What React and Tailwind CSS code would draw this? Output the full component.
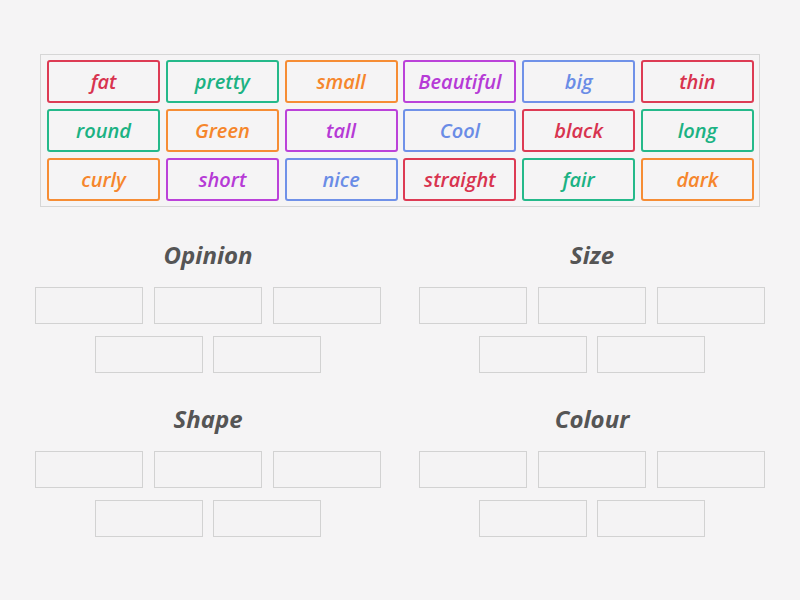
import React from "react";

const colors = {
  red: "border-[#dd3b54] text-[#d8334f]",
  green: "border-[#25b98a] text-[#1bb283]",
  orange: "border-[#f68d35] text-[#f5862c]",
  purple: "border-[#bb42d9] text-[#b63ad6]",
  blue: "border-[#7091e8] text-[#6a8ce6]",
};

const words = [
  ["fat", "red"], ["pretty", "green"], ["small", "orange"], ["Beautiful", "purple"], ["big", "blue"], ["thin", "red"],
  ["round", "green"], ["Green", "orange"], ["tall", "purple"], ["Cool", "blue"], ["black", "red"], ["long", "green"],
  ["curly", "orange"], ["short", "purple"], ["nice", "blue"], ["straight", "red"], ["fair", "green"], ["dark", "orange"],
];

const groups = ["Opinion", "Size", "Shape", "Colour"];

const Slot = () => (
  <div className="w-[108px] h-[37px] border border-[#d2d2d2] bg-[#f4f3f4]" />
);

const Group = ({ title }) => (
  <div className="w-[346px] flex flex-col items-center">
    <div className="h-[36px] flex items-center text-[24px] font-bold italic text-[#555555]" style={{ fontFamily: "'Open Sans', sans-serif" }}>
      {title}
    </div>
    <div className="mt-[14px] flex gap-[11px]">
      <Slot />
      <Slot />
      <Slot />
    </div>
    <div className="mt-[12px] flex gap-[10px]">
      <Slot />
      <Slot />
    </div>
  </div>
);

export default function App() {
  return (
    <div className="w-[800px] h-[600px] bg-[#f5f4f5] overflow-hidden pt-[54px]">
      <div className="mx-[40px] w-[720px] border border-[#d6d6d6] pl-[6px] pr-[5px] py-[5px] grid grid-cols-6 gap-x-[5.6px] gap-y-[6px]">
        {words.map(([w, c]) => (
          <div
            key={w}
            className={`h-[43px] border-2 rounded-[3px] flex items-center justify-center text-[20px] font-semibold italic ${colors[c]}`}
            style={{ fontFamily: "'Open Sans', sans-serif" }}
          >
            {w}
          </div>
        ))}
      </div>
      <div className="mt-[30px] ml-[35px] grid grid-cols-[346px_346px] gap-x-[38px] gap-y-[28px]">
        {groups.map((g) => (
          <Group key={g} title={g} />
        ))}
      </div>
    </div>
  );
}
